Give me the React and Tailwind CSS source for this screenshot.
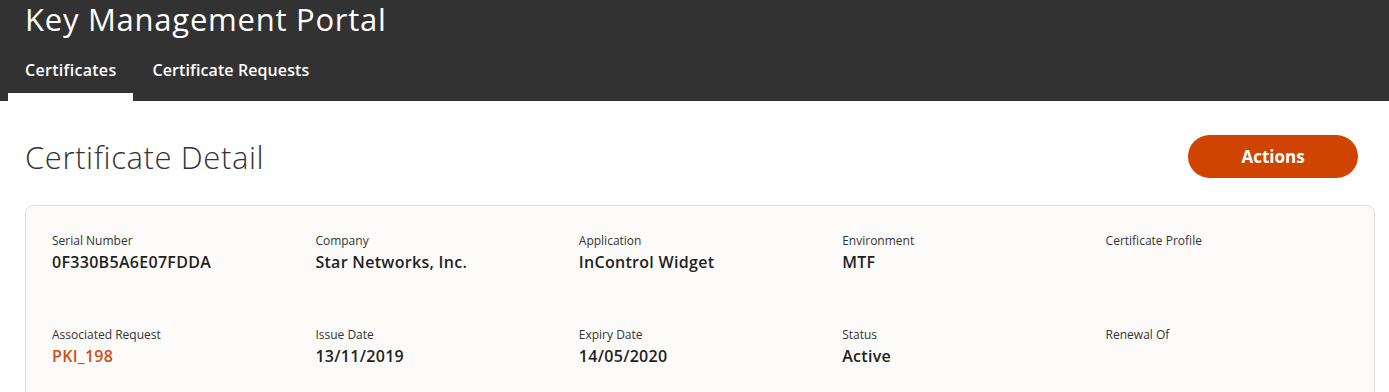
import React from "react";

const fields = [
  { label: "Serial Number", value: "0F330B5A6E07FDDA" },
  { label: "Company", value: "Star Networks, Inc." },
  { label: "Application", value: "InControl Widget" },
  { label: "Environment", value: "MTF" },
  { label: "Certificate Profile", value: "" },
  { label: "Associated Request", value: "PKI_198", link: true },
  { label: "Issue Date", value: "13/11/2019" },
  { label: "Expiry Date", value: "14/05/2020" },
  { label: "Status", value: "Active" },
  { label: "Renewal Of", value: "" },
];

export default function App() {
  return (
    <div
      className="min-h-screen bg-white text-[#333333]"
      style={{ fontFamily: "'Open Sans', 'Noto Sans', sans-serif" }}
    >
      <header className="bg-[#323232] h-[101px] flex flex-col">
        <h1 className="pl-[25px] pt-[1px] text-[31px] leading-[36px] tracking-[0.75px] font-normal text-white">
          Key Management Portal
        </h1>
        <nav className="mt-auto flex pl-[8px] gap-[2px]">
          <a className="px-[17px] pb-[11px] text-[16px] leading-[24px] tracking-[0.3px] font-semibold text-white border-b-[8px] border-white">
            Certificates
          </a>
          <a className="px-[17px] pb-[11px] text-[16px] leading-[24px] tracking-[0.1px] font-semibold text-white border-b-[8px] border-transparent">
            Certificate Requests
          </a>
        </nav>
      </header>

      <main className="pl-[25px] pr-[14px]">
        <div className="mt-[34px] flex items-center justify-between pr-[17px] h-[43px]">
          <h2 className="text-[31px] leading-[36px] tracking-[0.6px] font-light text-[#333333]">
            Certificate Detail
          </h2>
          <button className="w-[170px] h-[43px] rounded-full bg-[#cf4500] text-white text-[17px] font-bold">
            Actions
          </button>
        </div>

        <section className="mt-[27px] border border-[#dedede] rounded-[8px] bg-[#fcfbfa] pl-[26px] pr-[5px] pt-[27px] pb-[40px]">
          <div className="grid grid-cols-5">
            {fields.map((f) => (
              <div key={f.label} className="h-[94px]">
                <div className="text-[12px] leading-[16px] text-[#333333]">{f.label}</div>
                <div
                  className={
                    "mt-[2px] text-[16px] leading-[22px] tracking-[0.3px] font-semibold " +
                    (f.link ? "text-[#cf4f17]" : "text-[#1f1f1f]")
                  }
                >
                  {f.value}
                </div>
              </div>
            ))}
          </div>
        </section>
      </main>
    </div>
  );
}
